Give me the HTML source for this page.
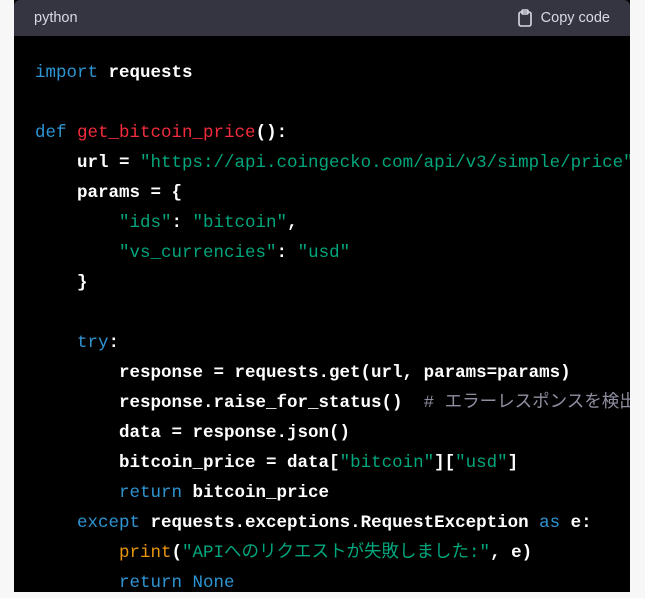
<!DOCTYPE html>
<html><head><meta charset="utf-8"><style>
html,body{margin:0;padding:0;background:#f7f7f8;width:645px;height:592px;overflow:hidden}
.blk{position:absolute;left:14px;top:0;width:616px;height:592px;background:#000}
.hd{height:36px;background:#343541;color:#d9d9e3;font:14.5px "Liberation Sans",sans-serif;display:flex;align-items:center;justify-content:space-between;padding:0 20px 0 20px;box-sizing:border-box;border-radius:6px 6px 0 0}
.cp{display:flex;align-items:center;gap:8px}
pre{margin:0;padding:22px 0 0 21px;font:bold 17.5px/30px "Liberation Mono","Noto Sans CJK JP",monospace;color:#fff;white-space:pre;overflow:hidden}
.k{color:#2e95d3;font-weight:normal}.s{color:#00a67d;font-weight:normal}.f{color:#f22c3d;font-weight:normal}.c{color:#8e8ea0;font-weight:normal}.p{color:#e9950c;font-weight:normal}
</style></head><body>
<div class="blk">
<div class="hd"><span>python</span><span class="cp"><svg width="16" height="18" viewBox="0 0 16 18" fill="none" stroke="#d9d9e3" stroke-width="1.6"><rect x="2" y="3" width="12" height="14" rx="2"/><rect x="5" y="1" width="6" height="4" rx="1"/></svg>Copy code</span></div>
<pre><span class="k">import</span> requests

<span class="k">def</span> <span class="f">get_bitcoin_price</span>():
    url = <span class="s">"https://api.coingecko.com/api/v3/simple/price"</span>
    params = {
        <span class="s">"ids"</span>: <span class="s">"bitcoin"</span>,
        <span class="s">"vs_currencies"</span>: <span class="s">"usd"</span>
    }

    <span class="k">try</span>:
        response = requests.get(url, params=params)
        response.raise_for_status()  <span class="c"># エラーレスポンスを検出</span>
        data = response.json()
        bitcoin_price = data[<span class="s">"bitcoin"</span>][<span class="s">"usd"</span>]
        <span class="k">return</span> bitcoin_price
    <span class="k">except</span> requests.exceptions.RequestException <span class="k">as</span> e:
        <span class="p">print</span>(<span class="s">"APIへのリクエストが失敗しました:"</span>, e)
        <span class="k">return</span> <span class="k">None</span></pre>
</div>
</body></html>
